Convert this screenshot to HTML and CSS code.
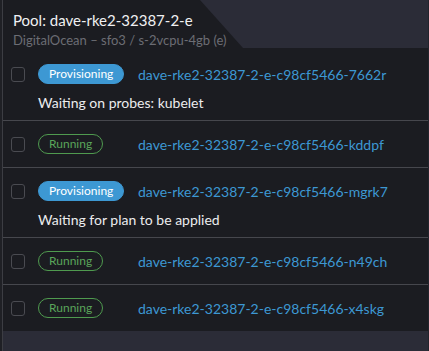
FILE: index.html
```html
<!DOCTYPE html>
<html>
<head>
<meta charset="utf-8">
<link rel="stylesheet" href="styles.css">
</head>
<body>
<div class="page">
  <div class="strip"></div>
  <div class="pool">
    <div class="pool-head">
      <div class="pool-title">Pool: dave-rke2-32387-2-e</div>
      <div class="pool-sub">DigitalOcean – sfo3 / s-2vcpu-4gb (e)</div>
    </div>
    <div class="table">
      <div class="row row-first">
        <div class="main">
          <span class="check"></span>
          <span class="cell-state"><span class="badge badge-prov">Provisioning</span></span>
          <a class="link">dave-rke2-32387-2-e-c98cf5466-7662r</a>
        </div>
        <div class="desc">Waiting on probes: kubelet</div>
      </div>
      <div class="row">
        <div class="main">
          <span class="check"></span>
          <span class="cell-state"><span class="badge badge-run">Running</span></span>
          <a class="link">dave-rke2-32387-2-e-c98cf5466-kddpf</a>
        </div>
      </div>
      <div class="row">
        <div class="main">
          <span class="check"></span>
          <span class="cell-state"><span class="badge badge-prov">Provisioning</span></span>
          <a class="link">dave-rke2-32387-2-e-c98cf5466-mgrk7</a>
        </div>
        <div class="desc">Waiting for plan to be applied</div>
      </div>
      <div class="row">
        <div class="main">
          <span class="check"></span>
          <span class="cell-state"><span class="badge badge-run">Running</span></span>
          <a class="link">dave-rke2-32387-2-e-c98cf5466-n49ch</a>
        </div>
      </div>
      <div class="row row-last">
        <div class="main">
          <span class="check"></span>
          <span class="cell-state"><span class="badge badge-run">Running</span></span>
          <a class="link">dave-rke2-32387-2-e-c98cf5466-x4skg</a>
        </div>
      </div>
    </div>
  </div>
</div>
</body>
</html>
```

FILE: styles.css
```css
* { box-sizing: border-box; }
html, body {
  margin: 0;
  padding: 0;
  background: #2b2c37;
  font-family: Lato, "Noto Sans", sans-serif;
  color: #e8e8ea;
}
.page {
  display: flex;
  height: 351px;
}
.strip {
  width: 2px;
  background: #1f2025;
  flex: none;
}
.pool {
  flex: 1;
  border-left: 1px solid #3c3d43;
  border-right: 1px solid #23242c;
}
.pool-head {
  width: 240px;
  height: 48px;
  background: #1b1c21;
  clip-path: polygon(0 0, 197px 0, 100% 100%, 0 100%);
  padding: 10px 0 0 10px;
}
.pool-title {
  font-size: 15px;
  line-height: 20px;
  color: #f0f0f2;
}
.pool-sub {
  font-size: 13px;
  line-height: 16px;
  color: #6c6d74;
  margin-top: 2px;
}
.table {
  background: #1b1c21;
}
.row {
  padding: 13px 0 13px 8px;
  border-bottom: 1px solid #46474d;
}
.row-first { padding-top: 16px; }
.row-last { border-bottom: none; }
.main {
  display: flex;
  align-items: center;
  height: 20px;
}
.check {
  width: 14px;
  height: 15px;
  border: 1px solid #4a4b51;
  border-radius: 3px;
  margin-right: 13px;
  flex: none;
}
.cell-state {
  width: 100px;
  flex: none;
  display: flex;
}
.badge {
  height: 20px;
  border-radius: 10px;
  font-size: 12px;
  line-height: 18px;
  padding: 0 10px;
  border: 1px solid transparent;
}
.badge-prov {
  background: #3d98d3;
  border-color: #3d98d3;
  color: #ffffff;
}
.badge-run {
  border-color: #4f9a4f;
  color: #5aa55a;
}
.link {
  font-size: 14px;
  color: #3d98d3;
  text-decoration: none;
}
.desc {
  margin-top: 9px;
  margin-left: 27px;
  font-size: 14px;
  line-height: 20px;
  color: #ececee;
  margin-bottom: -6px;
}
```
